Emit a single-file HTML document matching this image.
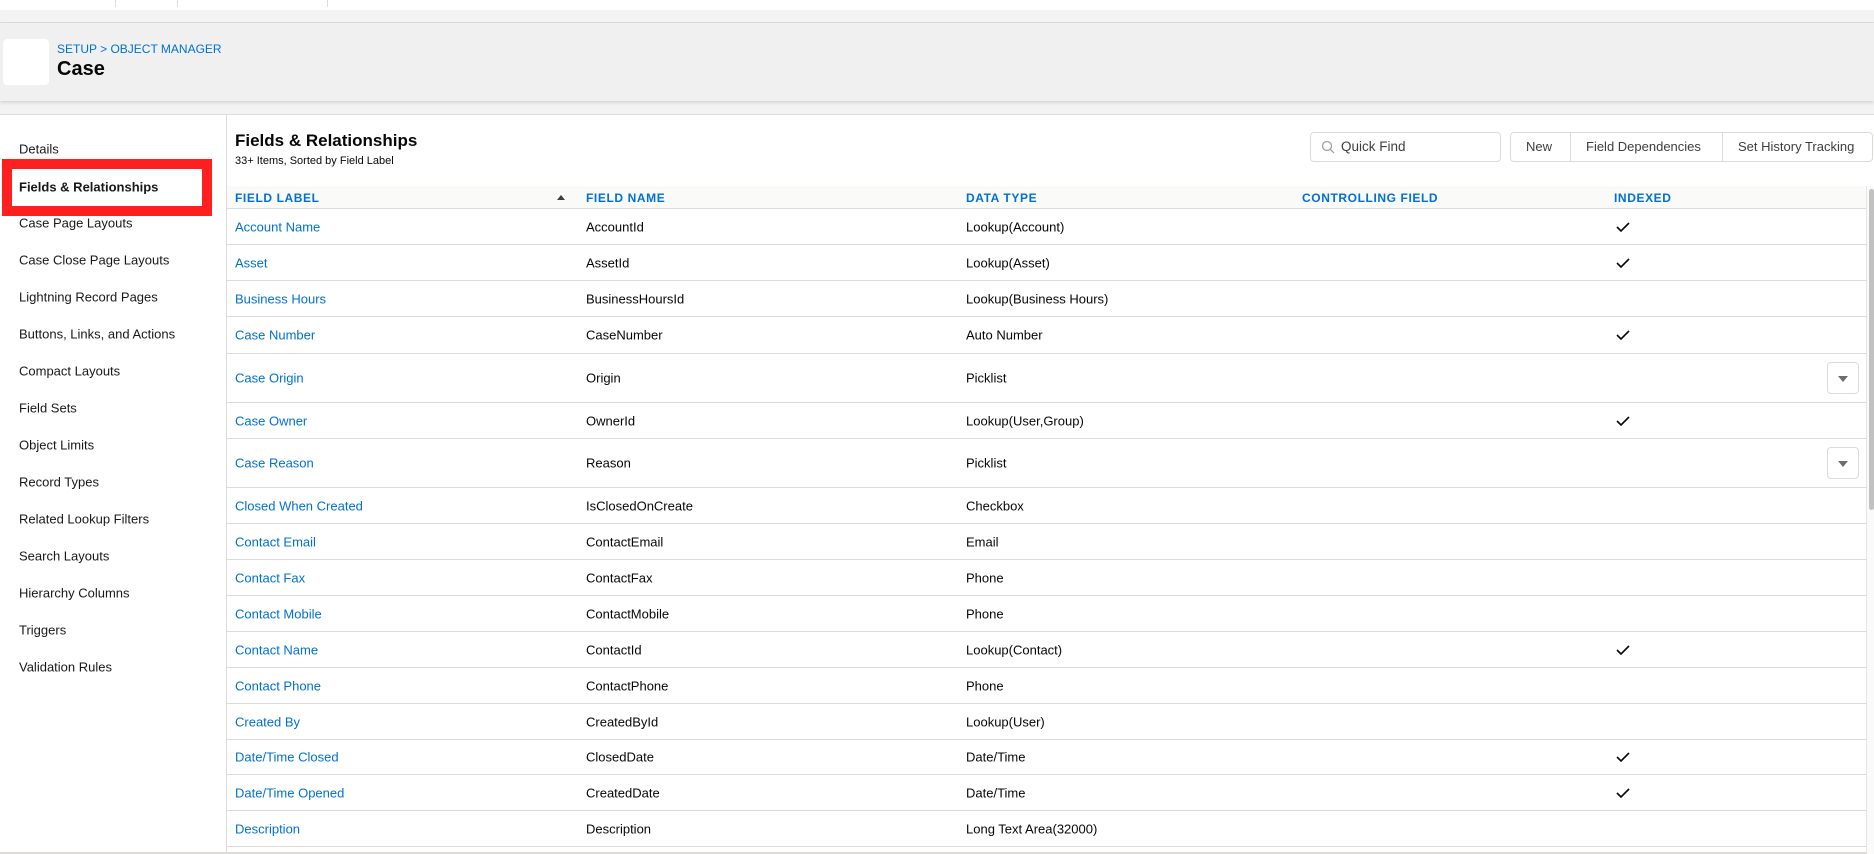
<!DOCTYPE html>
<html><head><meta charset="utf-8"><style>
*{margin:0;padding:0;box-sizing:border-box}
body{width:1874px;height:854px;overflow:hidden;background:#fff;font-family:"Liberation Sans",sans-serif;color:#080707;position:relative}
.a{position:absolute;white-space:nowrap}
.nav{position:absolute;left:19px;font-size:13px;color:#181818;transform:translateY(-50%)}
.row{position:absolute;left:227px;width:1640px;border-bottom:1px solid #dddbda}
.row span{position:absolute;top:50%;transform:translateY(-50%);font-size:13px;white-space:nowrap}
.c1{left:8px;color:#0070d2}.c2{left:359px}.c3{left:739px}
.row svg{position:absolute;left:1389px;top:50%;margin-top:-5px}
.dd{position:absolute;right:8px;top:50%;margin-top:-16px;width:32px;height:32px;border:1px solid #dddbda;border-radius:4px;background:#fff}
.dd:after{content:"";position:absolute;left:10px;top:13px;border-left:5.5px solid transparent;border-right:5.5px solid transparent;border-top:6px solid #706e6b}
.th{position:absolute;top:198px;transform:translateY(-50%);font-size:12px;font-weight:bold;color:#0070d2;letter-spacing:.6px}
</style></head><body>
<div class="a" style="left:0;top:0;width:1874px;height:10px;background:#fff"></div>
<div class="a" style="left:115px;top:0;width:1px;height:7px;background:#ddd"></div>
<div class="a" style="left:177px;top:0;width:1px;height:7px;background:#ddd"></div>
<div class="a" style="left:327px;top:0;width:1px;height:7px;background:#ddd"></div>
<div class="a" style="left:0;top:10px;width:1874px;height:104px;background:#f3f3f3"></div>
<div class="a" style="left:0;top:22px;width:1874px;height:1px;background:#dcdcdc"></div>
<div class="a" style="left:0;top:23px;width:1874px;height:78px;background:#f0f0f0;box-shadow:0 2px 3px rgba(0,0,0,.12)"></div>
<div class="a" style="left:0;top:114px;width:1874px;height:1px;background:#dcdcdc"></div>
<div class="a" style="left:3px;top:39px;width:46px;height:46px;background:#fff;border-radius:4px"></div>
<div class="a" style="left:57px;top:42px;font-size:12px;color:#0070d2">SETUP &gt; OBJECT MANAGER</div>
<div class="a" style="left:57px;top:58px;font-size:20px;font-weight:bold;color:#080707">Case</div>

<div class="a" style="left:226px;top:115px;width:1px;height:739px;background:#dddbda"></div>
<div class="a" style="left:0;top:852px;width:1874px;height:2px;background:#dddbda"></div>

<div class="nav" style="top:149px">Details</div>
<div class="a" style="left:2px;top:159px;width:210px;height:57px;border:10px solid #fe2020;background:#fff"></div>
<div class="nav" style="top:187px;font-weight:bold">Fields &amp; Relationships</div>
<div class="nav" style="top:223px">Case Page Layouts</div>
<div class="nav" style="top:260px">Case Close Page Layouts</div>
<div class="nav" style="top:297px">Lightning Record Pages</div>
<div class="nav" style="top:334px">Buttons, Links, and Actions</div>
<div class="nav" style="top:371px">Compact Layouts</div>
<div class="nav" style="top:408px">Field Sets</div>
<div class="nav" style="top:445px">Object Limits</div>
<div class="nav" style="top:482px">Record Types</div>
<div class="nav" style="top:519px">Related Lookup Filters</div>
<div class="nav" style="top:556px">Search Layouts</div>
<div class="nav" style="top:593px">Hierarchy Columns</div>
<div class="nav" style="top:630px">Triggers</div>
<div class="nav" style="top:667px">Validation Rules</div>

<div class="a" style="left:235px;top:131px;font-size:17px;font-weight:bold">Fields &amp; Relationships</div>
<div class="a" style="left:235px;top:155px;font-size:11px">33+ Items, Sorted by Field Label</div>

<div class="a" style="left:1310px;top:132px;width:191px;height:30px;border:1px solid #dddbda;border-radius:4px;background:#fff"></div>
<svg class="a" style="left:1321px;top:140px" width="14" height="14" viewBox="0 0 14 14"><circle cx="6" cy="6" r="4.5" fill="none" stroke="#a0a0a0" stroke-width="1.3"/><path d="M9.3 9.3L13 13" stroke="#a0a0a0" stroke-width="1.3"/></svg>
<div class="a" style="left:1341px;top:139px;font-size:13.5px;color:#3e3e3c">Quick Find</div>
<div class="a" style="left:1510px;top:132px;width:363px;height:30px;border:1px solid #dddbda;border-radius:4px;background:#fff"></div>
<div class="a" style="left:1570px;top:132px;width:1px;height:30px;background:#dddbda"></div>
<div class="a" style="left:1722px;top:132px;width:1px;height:30px;background:#dddbda"></div>
<div class="a" style="left:1526px;top:139px;font-size:13px;color:#3e3e3c">New</div>
<div class="a" style="left:1586px;top:139px;font-size:13px;color:#3e3e3c">Field Dependencies</div>
<div class="a" style="left:1738px;top:139px;font-size:13px;color:#3e3e3c">Set History Tracking</div>

<div class="a" style="left:227px;top:186px;width:1640px;height:23px;background:#fafaf9;border-bottom:1px solid #dddbda"></div>
<div class="th" style="left:235px">FIELD LABEL</div>
<div class="a" style="left:557px;top:195px;border-left:4px solid transparent;border-right:4px solid transparent;border-bottom:5px solid #3e3e3c"></div>
<div class="th" style="left:586px">FIELD NAME</div>
<div class="th" style="left:966px">DATA TYPE</div>
<div class="th" style="left:1302px">CONTROLLING FIELD</div>
<div class="th" style="left:1614px">INDEXED</div>
<div class="a" style="left:1866px;top:186px;width:8px;height:668px;background:#fafafa;border-left:1px solid #e5e5e5"></div>
<div class="a" style="left:1869px;top:189px;width:5px;height:321px;background:#c1c1c1;border-radius:3px"></div>

<div class="row" style="top:209px;height:36px"><span class="c1">Account Name</span><span class="c2">AccountId</span><span class="c3">Lookup(Account)</span><svg width="14" height="10" viewBox="0 0 14 10"><path d="M1 5L5 9L13 1" fill="none" stroke="#080707" stroke-width="1.6"/></svg></div>
<div class="row" style="top:245px;height:36px"><span class="c1">Asset</span><span class="c2">AssetId</span><span class="c3">Lookup(Asset)</span><svg width="14" height="10" viewBox="0 0 14 10"><path d="M1 5L5 9L13 1" fill="none" stroke="#080707" stroke-width="1.6"/></svg></div>
<div class="row" style="top:281px;height:36px"><span class="c1">Business Hours</span><span class="c2">BusinessHoursId</span><span class="c3">Lookup(Business Hours)</span></div>
<div class="row" style="top:317px;height:37px"><span class="c1">Case Number</span><span class="c2">CaseNumber</span><span class="c3">Auto Number</span><svg width="14" height="10" viewBox="0 0 14 10"><path d="M1 5L5 9L13 1" fill="none" stroke="#080707" stroke-width="1.6"/></svg></div>
<div class="row" style="top:354px;height:49px"><span class="c1">Case Origin</span><span class="c2">Origin</span><span class="c3">Picklist</span><div class="dd"></div></div>
<div class="row" style="top:403px;height:36px"><span class="c1">Case Owner</span><span class="c2">OwnerId</span><span class="c3">Lookup(User,Group)</span><svg width="14" height="10" viewBox="0 0 14 10"><path d="M1 5L5 9L13 1" fill="none" stroke="#080707" stroke-width="1.6"/></svg></div>
<div class="row" style="top:439px;height:49px"><span class="c1">Case Reason</span><span class="c2">Reason</span><span class="c3">Picklist</span><div class="dd"></div></div>
<div class="row" style="top:488px;height:36px"><span class="c1">Closed When Created</span><span class="c2">IsClosedOnCreate</span><span class="c3">Checkbox</span></div>
<div class="row" style="top:524px;height:36px"><span class="c1">Contact Email</span><span class="c2">ContactEmail</span><span class="c3">Email</span></div>
<div class="row" style="top:560px;height:36px"><span class="c1">Contact Fax</span><span class="c2">ContactFax</span><span class="c3">Phone</span></div>
<div class="row" style="top:596px;height:36px"><span class="c1">Contact Mobile</span><span class="c2">ContactMobile</span><span class="c3">Phone</span></div>
<div class="row" style="top:632px;height:36px"><span class="c1">Contact Name</span><span class="c2">ContactId</span><span class="c3">Lookup(Contact)</span><svg width="14" height="10" viewBox="0 0 14 10"><path d="M1 5L5 9L13 1" fill="none" stroke="#080707" stroke-width="1.6"/></svg></div>
<div class="row" style="top:668px;height:36px"><span class="c1">Contact Phone</span><span class="c2">ContactPhone</span><span class="c3">Phone</span></div>
<div class="row" style="top:704px;height:36px"><span class="c1">Created By</span><span class="c2">CreatedById</span><span class="c3">Lookup(User)</span></div>
<div class="row" style="top:740px;height:35px"><span class="c1">Date/Time Closed</span><span class="c2">ClosedDate</span><span class="c3">Date/Time</span><svg width="14" height="10" viewBox="0 0 14 10"><path d="M1 5L5 9L13 1" fill="none" stroke="#080707" stroke-width="1.6"/></svg></div>
<div class="row" style="top:775px;height:36px"><span class="c1">Date/Time Opened</span><span class="c2">CreatedDate</span><span class="c3">Date/Time</span><svg width="14" height="10" viewBox="0 0 14 10"><path d="M1 5L5 9L13 1" fill="none" stroke="#080707" stroke-width="1.6"/></svg></div>
<div class="row" style="top:811px;height:36px"><span class="c1">Description</span><span class="c2">Description</span><span class="c3">Long Text Area(32000)</span></div>
</body></html>
